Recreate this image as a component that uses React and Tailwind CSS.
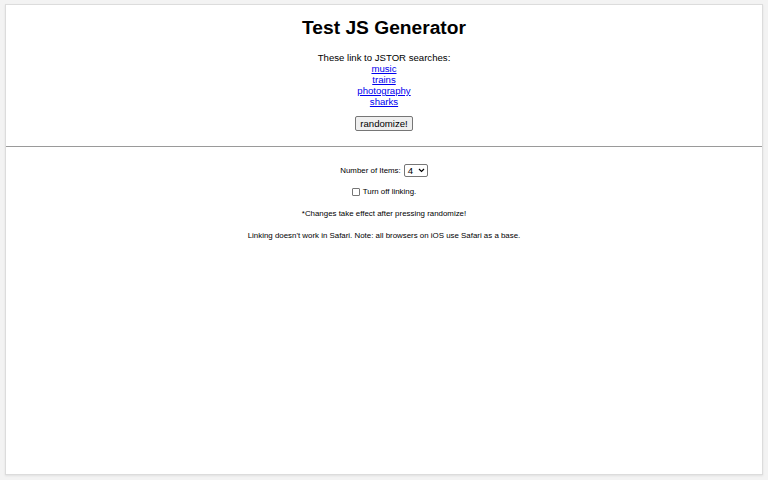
export default function App() {
  const topics = ["music", "trains", "photography", "sharks"];
  return (
    <div className="min-h-[480px] w-[768px] bg-[#f3f3f3] pt-[4px] px-[5px]" style={{ fontFamily: '"Liberation Sans", Arial, sans-serif' }}>
      <div className="h-[471px] border border-[#dcdcdc] bg-white shadow-[0_1px_2px_rgba(0,0,0,0.08)] text-black">
        <div className="flex flex-col items-center pt-[12px]">
          <h1 className="text-[19.2px] leading-[22px] font-bold">Test JS Generator</h1>
          <p className="mt-[13px] text-[9.6px] leading-[11px]">These link to JSTOR searches:</p>
          <div className="flex flex-col items-center text-[9.6px] leading-[11px]">
            {topics.map((t) => (
              <a key={t} href="#" className="text-[#0000ee] underline">{t}</a>
            ))}
          </div>
          <button className="mt-[9px] h-[15px] px-[4px] text-[9.6px] leading-[13px] bg-[#efefef] border border-[#767676] rounded-[2px]">
            randomize!
          </button>
        </div>
        <div className="mt-[15px] border-t border-[#9a9a9a]" />
        <div className="flex flex-col items-center text-[7.9px] leading-[9px]">
          <div className="mt-[17px] flex items-center gap-[3px]">
            <span>Number of Items:</span>
            <span className="flex h-[13px] w-[24px] items-center justify-between border border-[#767676] rounded-[2px] pl-[3px] pr-[2px] text-[9.6px]">
              4
              <svg width="7" height="5" viewBox="0 0 7 5"><path d="M1 1l2.5 2.5L6 1" fill="none" stroke="#000" strokeWidth="1.2" /></svg>
            </span>
          </div>
          <div className="mt-[10px] flex items-center gap-[3px]">
            <span className="inline-block h-[8px] w-[8px] border border-[#767676] rounded-[1px]" />
            <span>Turn off linking.</span>
          </div>
          <p className="mt-[13px]">*Changes take effect after pressing randomize!</p>
          <p className="mt-[13px]">Linking doesn't work in Safari. Note: all browsers on iOS use Safari as a base.</p>
        </div>
      </div>
    </div>
  );
}
